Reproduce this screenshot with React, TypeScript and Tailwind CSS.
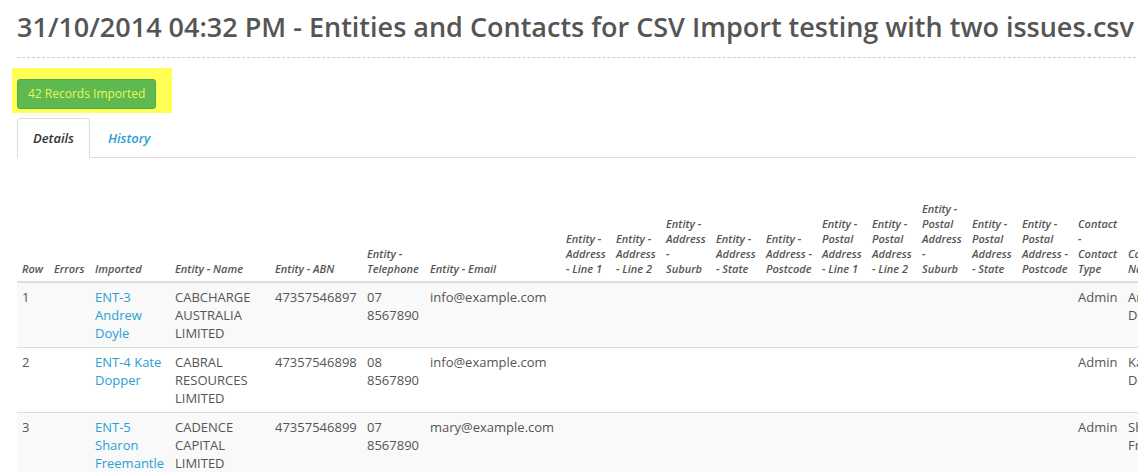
import React from 'react';

const COLUMNS: { label: string; width: string }[] = [
  { label: 'Row', width: 'w-[32px]' },
  { label: 'Errors', width: 'w-[41px]' },
  { label: 'Imported', width: 'w-[80px]' },
  { label: 'Entity - Name', width: 'w-[100px]' },
  { label: 'Entity - ABN', width: 'w-[92px]' },
  { label: 'Entity - Telephone', width: 'w-[63px]' },
  { label: 'Entity - Email', width: 'w-[136px]' },
  { label: 'Entity - Address - Line 1', width: 'w-[50px]' },
  { label: 'Entity - Address - Line 2', width: 'w-[50px]' },
  { label: 'Entity - Address - Suburb', width: 'w-[50px]' },
  { label: 'Entity - Address - State', width: 'w-[50px]' },
  { label: 'Entity - Address - Postcode', width: 'w-[56px] pr-[1px]' },
  { label: 'Entity - Postal Address - Line 1', width: 'w-[50px]' },
  { label: 'Entity - Postal Address - Line 2', width: 'w-[50px]' },
  { label: 'Entity - Postal Address - Suburb', width: 'w-[50px]' },
  { label: 'Entity - Postal Address - State', width: 'w-[50px]' },
  { label: 'Entity - Postal Address - Postcode', width: 'w-[56px] pr-[1px]' },
  { label: 'Contact - Contact Type', width: 'w-[50px]' },
  { label: 'Contact - Name', width: 'w-[70px]' },
  { label: 'Contact - Email', width: 'w-[136px]' },
  { label: 'Contact - Telephone', width: 'w-[70px]' },
];

const ROWS = [
  {
    row: '1',
    imported: 'ENT-3 Andrew Doyle',
    name: 'CABCHARGE AUSTRALIA LIMITED',
    abn: '47357546897',
    tel: '07 8567890',
    email: 'info@example.com',
    type: 'Admin',
    contact: 'Andrew Doyle',
  },
  {
    row: '2',
    imported: 'ENT-4 Kate Dopper',
    name: 'CABRAL RESOURCES LIMITED',
    abn: '47357546898',
    tel: '08 8567890',
    email: 'info@example.com',
    type: 'Admin',
    contact: 'Kate Dopper',
  },
  {
    row: '3',
    imported: 'ENT-5 Sharon Freemantle',
    name: 'CADENCE CAPITAL LIMITED',
    abn: '47357546899',
    tel: '07 8567890',
    email: 'mary@example.com',
    type: 'Admin',
    contact: 'Sharon Freemantle',
  },
];

const App: React.FC = () => {
  return (
    <div className="w-[1138px] h-[472px] overflow-hidden bg-white font-['Open_Sans',sans-serif] text-[#555]">
      <div className="pl-[17px] pr-[2px]">
        {/* Page header */}
        <div className="pt-[9px] pb-[12px] border-b border-dashed border-[#ccc]">
          <h1 className="text-[27px] leading-[36px] font-semibold text-[#555] whitespace-nowrap">
            31/10/2014 04:32 PM - Entities and Contacts for CSV Import testing with two issues.csv
          </h1>
        </div>

        {/* Highlighted status */}
        <div className="mt-[10px] -ml-[5px] inline-block bg-[#ffff55] pl-[5px] pt-[11px] pr-[16px] pb-[4px]">
          <span className="block rounded-[3px] border border-[#4fae48] bg-[#5db950] px-[10px] py-[5px] text-[12px] leading-[18px] text-[#eef55c]">
            42 Records Imported
          </span>
        </div>

        {/* Tabs */}
        <ul className="mt-[5px] flex border-b border-[#ddd] text-[13px] leading-[18px] italic font-semibold">
          <li className="-mb-px">
            <span className="block rounded-t-[4px] border border-[#ddd] border-b-white bg-white px-[15px] py-[10px] text-[#333]">
              Details
            </span>
          </li>
          <li className="-mb-px ml-[2px]">
            <span className="block border border-transparent px-[15px] py-[10px] text-[#2a9fd6]">History</span>
          </li>
        </ul>

        {/* Import rows */}
        <table className="mt-[38px] w-[1382px] max-w-none table-fixed border-collapse text-left">
          <thead>
            <tr>
              {COLUMNS.map((col) => (
                <th
                  key={col.label}
                  className={`${col.width} align-bottom border-b-2 border-[#ddd] pl-[5px] py-[5px] text-[11px] leading-[15px] italic font-semibold text-[#555] ${
                    col.width.includes('pr-') ? '' : 'pr-[5px]'
                  }`}
                >
                  {col.label}
                </th>
              ))}
            </tr>
          </thead>
          <tbody className="text-[13px] leading-[18px]">
            {ROWS.map((r, i) => (
              <tr key={r.row} className={i % 2 === 0 ? 'bg-[#f9f9f9]' : 'bg-white'}>
                <td className="align-top border-t border-[#ddd] p-[5px]">{r.row}</td>
                <td className="align-top border-t border-[#ddd] p-[5px]"></td>
                <td className="align-top border-t border-[#ddd] p-[5px] text-[#2a9fd6]">{r.imported}</td>
                <td className="align-top border-t border-[#ddd] p-[5px]">{r.name}</td>
                <td className="align-top border-t border-[#ddd] p-[5px]">{r.abn}</td>
                <td className="align-top border-t border-[#ddd] p-[5px]">{r.tel}</td>
                <td className="align-top border-t border-[#ddd] p-[5px]">{r.email}</td>
                {Array.from({ length: 10 }).map((_, j) => (
                  <td key={j} className="align-top border-t border-[#ddd] p-[5px]"></td>
                ))}
                <td className="align-top border-t border-[#ddd] p-[5px]">{r.type}</td>
                <td className="align-top border-t border-[#ddd] p-[5px]">{r.contact}</td>
                <td className="align-top border-t border-[#ddd] p-[5px]">{r.email}</td>
                <td className="align-top border-t border-[#ddd] p-[5px]">{r.tel}</td>
              </tr>
            ))}
          </tbody>
        </table>
      </div>
    </div>
  );
};

export default App;
